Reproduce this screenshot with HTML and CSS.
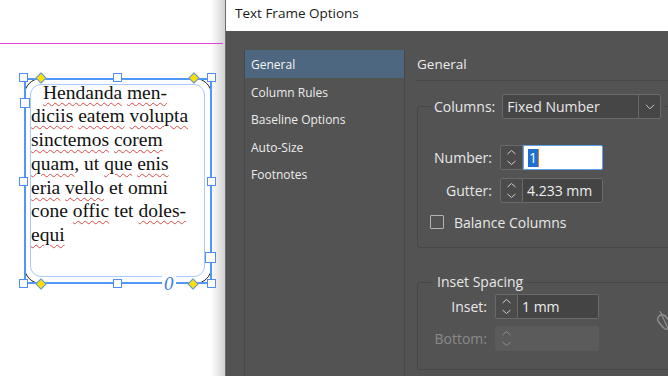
FILE: index.html
```html
<!DOCTYPE html>
<html lang="en">
<head>
<meta charset="utf-8">
<title>Text Frame Options</title>
<link rel="stylesheet" href="styles.css">
</head>
<body>
<div class="app">
  <section class="canvas">
    <div class="guide"></div>
    <div class="frame">
      <div class="frame-shape"></div>
      <div class="frame-box"></div>
      <div class="frame-inner">
        <div class="story">
          <div class="ln first"><span class="sp">Hendanda</span> <span class="sp">men-</span></div>
          <div class="ln"><span class="sp">diciis</span> <span class="sp">eatem</span> <span class="sp">volupta</span></div>
          <div class="ln"><span class="sp">sinctemos</span> <span class="sp">corem</span></div>
          <div class="ln"><span class="sp">quam</span>, ut <span class="sp">que</span> <span class="sp">enis</span></div>
          <div class="ln"><span class="sp">eria</span> <span class="sp">vello</span> et omni</div>
          <div class="ln">cone <span class="sp">offic</span> tet <span class="sp">doles-</span></div>
          <div class="ln"><span class="sp">equi</span></div>
        </div>
      </div>
      <span class="hd tl"></span><span class="hd tm"></span><span class="hd tr"></span>
      <span class="hd ml"></span><span class="hd mr"></span>
      <span class="hd bl"></span><span class="hd bm"></span><span class="hd br"></span>
      <span class="port in"></span><span class="port out"></span>
      <span class="dia d1"></span><span class="dia d2"></span><span class="dia d3"></span><span class="dia d4"></span>
      <span class="ovf">0</span>
    </div>
  </section>

  <section class="dialog">
    <header class="titlebar">Text Frame Options</header>
    <div class="dlg-body">
      <nav class="sidebar">
        <div class="nav-item active">General</div>
        <div class="nav-item">Column Rules</div>
        <div class="nav-item">Baseline Options</div>
        <div class="nav-item">Auto-Size</div>
        <div class="nav-item">Footnotes</div>
      </nav>
      <main class="pane">
        <h2 class="pane-title">General</h2>

        <fieldset class="group cols">
          <legend class="legend-cols">
            <div class="legend-row">
              <span class="legend-lbl">Columns:</span>
              <div class="select">
                <span class="select-val">Fixed Number</span>
                <span class="select-btn">
                  <svg width="10" height="6" viewBox="0 0 10 6"><polyline points="1,0.8 5,4.8 9,0.8" fill="none" stroke="#cfcfcf" stroke-width="1"/></svg>
                </span>
              </div>
            </div>
          </legend>
          <div class="row">
            <span class="lbl lbl-cols">Number:</span>
            <span class="spin">
              <svg width="21" height="23" viewBox="0 0 21 23"><polyline points="6.5,8 10.5,4.5 14.5,8" fill="none" stroke="#cdcdcd" stroke-width="1"/><polyline points="6.5,15 10.5,18.5 14.5,15" fill="none" stroke="#cdcdcd" stroke-width="1"/></svg>
            </span>
            <span class="val focus"><span class="sel">1</span><span class="caret"></span></span>
          </div>
          <div class="row gap8">
            <span class="lbl lbl-cols">Gutter:</span>
            <span class="spin">
              <svg width="21" height="23" viewBox="0 0 21 23"><polyline points="6.5,8 10.5,4.5 14.5,8" fill="none" stroke="#cdcdcd" stroke-width="1"/><polyline points="6.5,15 10.5,18.5 14.5,15" fill="none" stroke="#cdcdcd" stroke-width="1"/></svg>
            </span>
            <span class="val">4.233 mm</span>
          </div>
          <div class="check-row">
            <span class="checkbox"></span>
            <span class="check-lbl">Balance Columns</span>
          </div>
        </fieldset>

        <fieldset class="group inset">
          <legend class="legend-inset">Inset Spacing</legend>
          <div class="inset-body">
            <div class="inset-rows">
              <div class="row">
                <span class="lbl lbl-inset">Inset:</span>
                <span class="spin">
                  <svg width="21" height="23" viewBox="0 0 21 23"><polyline points="6.5,8 10.5,4.5 14.5,8" fill="none" stroke="#cdcdcd" stroke-width="1"/><polyline points="6.5,15 10.5,18.5 14.5,15" fill="none" stroke="#cdcdcd" stroke-width="1"/></svg>
                </span>
                <span class="val narrow">1 mm</span>
              </div>
              <div class="row gap7 disabled">
                <span class="lbl lbl-inset">Bottom:</span>
                <span class="spin">
                  <svg width="21" height="23" viewBox="0 0 21 23"><polyline points="6.5,8 10.5,4.5 14.5,8" fill="none" stroke="#8f8f8f" stroke-width="1"/><polyline points="6.5,15 10.5,18.5 14.5,15" fill="none" stroke="#8f8f8f" stroke-width="1"/></svg>
                </span>
                <span class="val narrow"></span>
              </div>
            </div>
            <svg class="link" width="24" height="30" viewBox="0 0 24 30">
              <rect x="3" y="6" width="9" height="16" rx="4.5" transform="rotate(-40 7.5 14)" fill="none" stroke="#8e8e8e" stroke-width="1.6"/>
              <line x1="3" y1="3" x2="14" y2="27" stroke="#8e8e8e" stroke-width="1.2"/>
            </svg>
          </div>
        </fieldset>
      </main>
    </div>
  </section>
</div>
</body>
</html>
```

FILE: styles.css
```css
html, body {
  margin: 0;
  padding: 0;
  width: 668px;
  height: 376px;
  overflow: hidden;
}

.app {
  display: flex;
  width: 668px;
  height: 376px;
}

/* ---------- layout canvas ---------- */
.canvas {
  flex: none;
  width: 225px;
  height: 376px;
  display: flex;
  flex-direction: column;
  background: linear-gradient(90deg, #ffffff 0, #ffffff 211px, #d2d2d2 225px);
}

.guide {
  margin-top: 43px;
  width: 223px;
  height: 1px;
  background: #e040e0;
}

.frame {
  position: relative;
  margin: 34px 0 0 24px;
  width: 188px;
  height: 206px;
}

.frame-shape {
  position: absolute;
  inset: 0;
  border: 1px solid #1c1c1c;
  border-radius: 17px;
}

.frame-box {
  position: absolute;
  inset: 0;
  border: 2px solid #5196fb;
}

.frame-inner {
  position: absolute;
  top: 6px;
  left: 6px;
  right: 7px;
  bottom: 7px;
  border: 1px solid #a9c9ff;
  border-radius: 11px;
}

.story {
  margin-top: -4.5px;
  font-family: "Liberation Serif", "Times New Roman", serif;
  font-size: 19.5px;
  line-height: 23.8px;
  color: #111;
  white-space: nowrap;
}

.ln.first {
  text-indent: 12px;
}

.sp {
  text-decoration: underline wavy #e04848;
  text-decoration-thickness: 1px;
  text-underline-offset: 3px;
}

.hd {
  position: absolute;
  width: 9px;
  height: 9px;
  box-sizing: border-box;
  background: #fff;
  border: 1px solid #4f8ef5;
}
.hd.tl { left: -5px; top: -5px; }
.hd.tm { left: 89px; top: -5px; }
.hd.tr { left: 183px; top: -5px; }
.hd.ml { left: -5px; top: 99px; }
.hd.mr { left: 183px; top: 99px; }
.hd.bl { left: -5px; top: 201px; }
.hd.bm { left: 89px; top: 201px; }
.hd.br { left: 183px; top: 201px; }

.port {
  position: absolute;
  box-sizing: border-box;
  background: #fff;
  border: 1px solid #4f8ef5;
}
.port.in { left: -4px; top: 20px; width: 10px; height: 10px; }
.port.out { left: 181px; top: 174px; width: 11px; height: 11px; }

.dia {
  position: absolute;
  width: 8px;
  height: 8px;
  box-sizing: border-box;
  background: #ffe000;
  border: 1px solid #5b95f0;
  transform: rotate(45deg);
}
.dia.d1 { left: 13px; top: -4px; }
.dia.d2 { left: 166px; top: -4px; }
.dia.d3 { left: 13px; top: 202px; }
.dia.d4 { left: 165px; top: 202px; }

.ovf {
  position: absolute;
  left: 138px;
  top: 196px;
  padding: 0 2px;
  background: #fff;
  font-family: "Liberation Serif", serif;
  font-style: italic;
  font-size: 19px;
  line-height: 19px;
  color: #3b7be0;
}

/* ---------- dialog ---------- */
.dialog {
  flex: none;
  width: 443px;
  height: 376px;
  box-sizing: border-box;
  border-left: 1px solid #6d6d6d;
  display: flex;
  flex-direction: column;
  overflow: hidden;
  font-family: "Open Sans", "Noto Sans", sans-serif;
}

.titlebar {
  flex: none;
  height: 31px;
  background: #fff;
  padding-left: 9px;
  font-size: 13.5px;
  line-height: 26px;
  color: #1b1b1b;
}

.dlg-body {
  flex: 1;
  display: flex;
  padding: 19px 0 0 18px;
  background: #535353;
  overflow: hidden;
}

.sidebar {
  flex: none;
  width: 161px;
  box-sizing: border-box;
  border-left: 1px solid #484848;
  border-right: 1px solid #484848;
}

.nav-item {
  height: 27.5px;
  box-sizing: border-box;
  padding: 3px 0 0 6px;
  line-height: 24.5px;
  font-size: 12px;
  color: #ececec;
}

.nav-item.active {
  background: #4d6780;
  color: #f4f4f4;
}

.pane {
  flex: none;
  width: 290px;
  margin-left: 11px;
  display: flex;
  flex-direction: column;
  color: #e8e8e8;
  font-size: 14px;
}

.pane-title {
  margin: 0;
  height: 30px;
  line-height: 29px;
  padding-left: 1px;
  border-bottom: 1px solid #484848;
  font-size: 13.5px;
  font-weight: normal;
  color: #ececec;
}

.group {
  margin: 13px 0 0 1px;
  border: 1px solid #474747;
  border-radius: 3px;
  min-width: 0;
}

.group.cols {
  padding: 26px 0 17px 13px;
}

.legend-cols {
  padding: 0 3px;
}

.legend-row {
  display: flex;
  align-items: center;
  gap: 7px;
}

.legend-lbl {
  line-height: 20px;
}

.select {
  display: flex;
  width: 159px;
  height: 25px;
  box-sizing: border-box;
  border: 1px solid #6a6a6a;
  border-radius: 2px;
  background: #464646;
}

.select-val {
  flex: 1;
  padding-left: 4px;
  line-height: 23px;
}

.select-btn {
  width: 21px;
  border-left: 1px solid #6a6a6a;
  display: flex;
  align-items: center;
  justify-content: center;
}

.row {
  display: flex;
  align-items: center;
  height: 25px;
}

.row.gap8 { margin-top: 8px; }
.row.gap7 { margin-top: 7px; }

.lbl {
  text-align: right;
  margin-right: 8px;
  white-space: nowrap;
}

.lbl-cols { width: 61px; }
.lbl-inset { width: 56px; }

.spin {
  display: block;
  width: 23px;
  height: 25px;
  box-sizing: border-box;
  border: 1px solid #6a6a6a;
  border-radius: 2px 0 0 2px;
  background: #4b4b4b;
}

.spin svg {
  display: block;
}

.val {
  display: block;
  width: 80px;
  height: 25px;
  box-sizing: border-box;
  border: 1px solid #6a6a6a;
  border-left: none;
  border-radius: 0 2px 2px 0;
  background: #444444;
  padding-left: 4px;
  line-height: 23px;
  color: #eeeeee;
  white-space: nowrap;
}

.val.narrow { width: 81px; }

.val.focus {
  background: #ffffff;
  border: 1px solid #5ea2ee;
  color: #fff;
  display: flex;
  align-items: center;
}

.sel {
  background: #1d6fd0;
  color: #fff;
  line-height: 18px;
  padding: 0 1px;
}

.caret {
  width: 1px;
  height: 18px;
  background: #ee7a1c;
}

.check-row {
  display: flex;
  align-items: center;
  height: 16px;
  margin-top: 11px;
}

.checkbox {
  width: 14px;
  height: 14px;
  box-sizing: border-box;
  margin-left: -1px;
  border: 1px solid #b4b4b4;
  border-radius: 1px;
}

.check-lbl {
  margin-left: 10px;
}

.group.inset {
  margin-top: 24px;
  padding: 2px 0 18px 13px;
}

.legend-inset {
  margin-left: 2px;
  padding: 0 4px;
  line-height: 20px;
}

.inset-body {
  display: flex;
  align-items: center;
}

.link {
  margin-left: 58px;
  flex: none;
}

.row.disabled .lbl {
  color: #8a8a8a;
}

.row.disabled .spin,
.row.disabled .val {
  border-color: #5a5a5a;
  background: #5b5b5b;
}
```
